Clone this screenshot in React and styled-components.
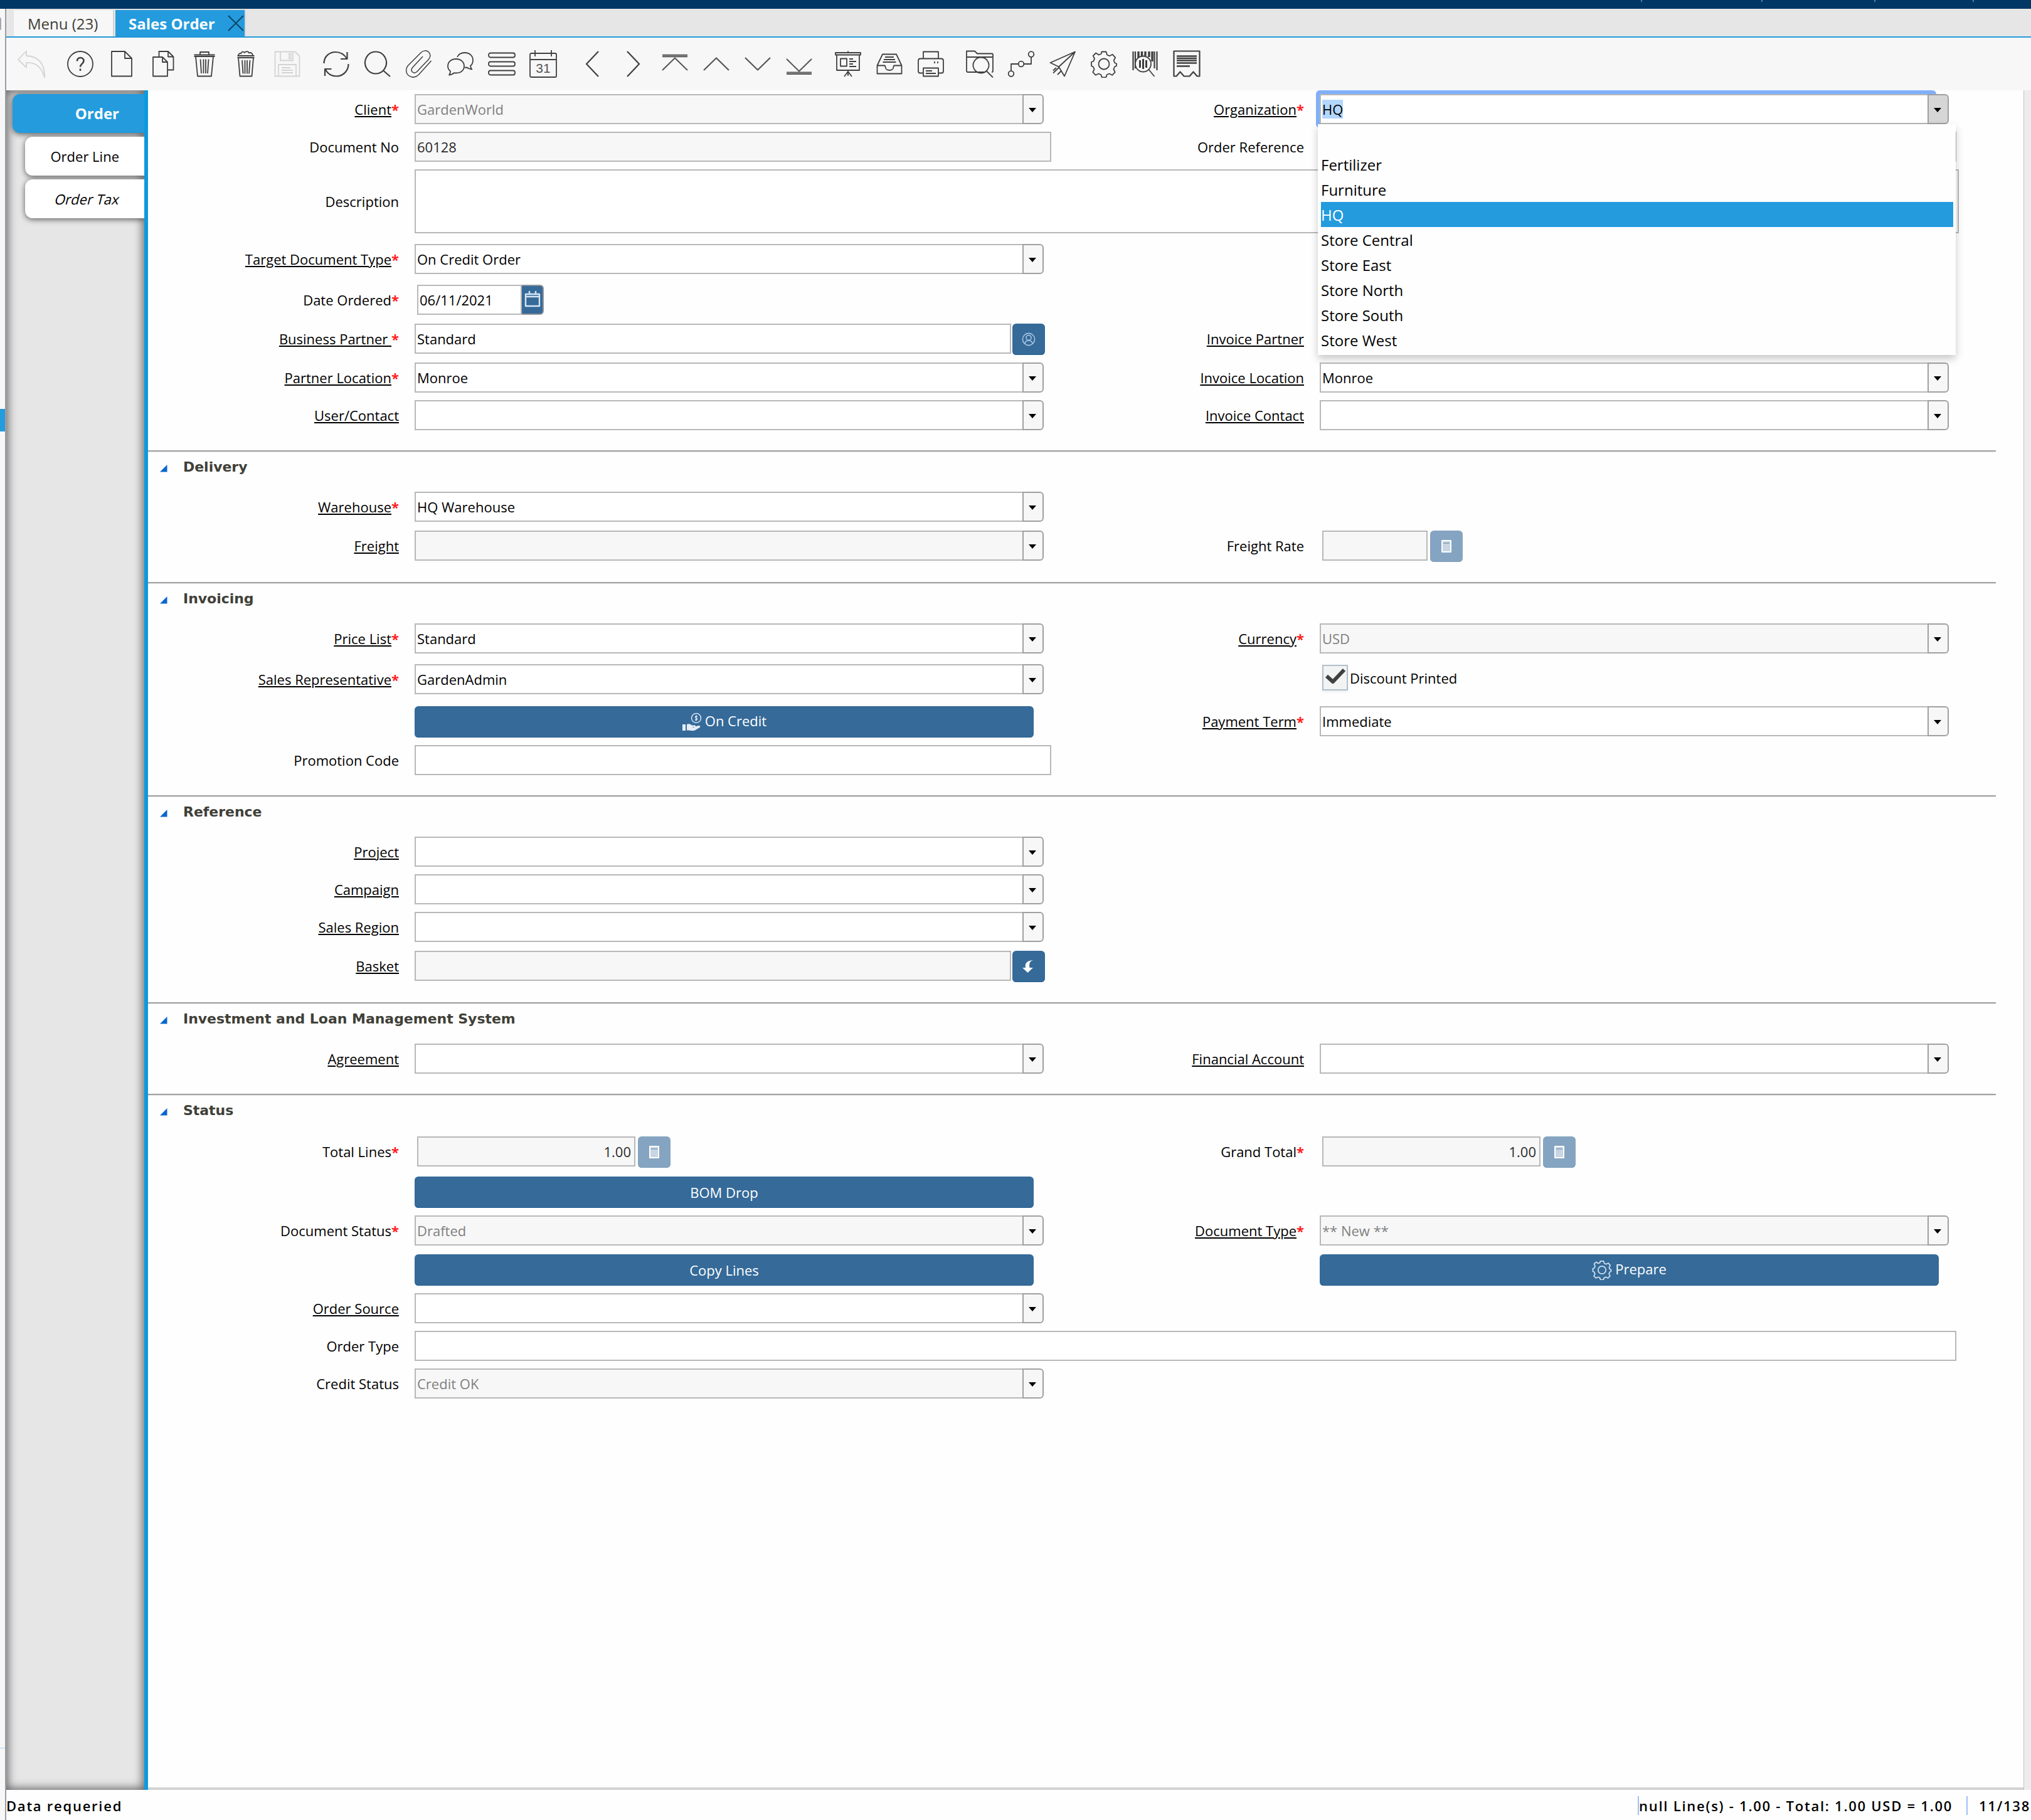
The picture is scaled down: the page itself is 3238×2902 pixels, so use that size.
import React from "react";
import styled, { createGlobalStyle, css } from "styled-components";

const GlobalStyle = createGlobalStyle`
  *, *::before, *::after { box-sizing: border-box; }
  html, body { margin: 0; padding: 0; background: #fefefe; }
  body { font-family: "Open Sans", "Noto Sans", sans-serif; font-size: 22px; color: #000; overflow: hidden; }
`;

const Screen = styled.div`
  width: 3238px;
  height: 2902px;
  display: flex;
  flex-direction: column;
  overflow: hidden;
  background: #fefefe;
`;
const TopBar = styled.header`
  height: 14px;
  flex: none;
  background: #003764;
  display: flex;
  justify-content: flex-end;
  padding-right: 91px;
`;
const TopTick = styled.span`
  width: 2px;
  height: 3px;
  margin-left: ${(p) => p.$gap}px;
  background: #5d7f9d;
`;
const Main = styled.div`
  flex: 1;
  display: flex;
  min-height: 0;
`;
const WestStrip = styled.aside`
  width: 10px;
  flex: none;
  background: #f7f7f7;
  border-right: 2px solid #9b9da5;
  display: flex;
  flex-direction: column;
`;
const StripKnob = styled.span`
  width: 2px;
  height: 20px;
  margin-top: 14px;
  background: #a9a6ae;
  border-radius: 0 2px 2px 0;
`;
const StripMark = styled.span`
  height: 36px;
  margin-top: 604px;
  background: #249bdd;
`;
const StripLine = styled.span`
  height: 3px;
  margin-top: 2098px;
  background: #dbe8f6;
`;
const Desk = styled.div`
  flex: 1;
  display: flex;
  flex-direction: column;
  min-width: 0;
`;

const TabBar = styled.nav`
  height: 46px;
  flex: none;
  background: #e6e6e6;
  border-bottom: 2px solid #249bdd;
  padding: 2px 0 0 12px;
  display: flex;
  gap: 4px;
`;
const Tab = styled.div`
  height: 42px;
  line-height: 42px;
  display: flex;
  align-items: center;
  width: ${(p) => (p.$active ? 206 : 158)}px;
  padding-left: ${(p) => (p.$active ? 21 : 22)}px;
  background: ${(p) => (p.$active ? "#249bdd" : "#f7f7f7")};
  color: ${(p) => (p.$active ? "#fff" : "#404038")};
  font-size: 24px;
  font-weight: ${(p) => (p.$active ? 700 : 400)};
  white-space: nowrap;
  box-shadow: 1px 0 2px rgba(0, 0, 0, 0.15);
`;
const TabText = styled.span`
  flex: 1;
  padding-top: 1px;
`;

const Toolbar = styled.div`
  height: 84px;
  flex: none;
  background: #f7f7f7;
  display: flex;
  align-items: center;
  gap: 34px;
  padding-left: 18px;
`;
const ToolGroup = styled.div`
  display: flex;
  gap: 22px;
`;
const Glyph = styled.svg`
  display: block;
  flex: none;
  width: ${(p) => p.$size || 44}px;
  height: ${(p) => p.$size || 44}px;
  fill: none;
  stroke: ${(p) => p.$color || "#3f3f3f"};
  stroke-width: ${(p) => p.$stroke || 1.8};
  stroke-linejoin: round;
`;

const Work = styled.div`
  height: 2710px;
  flex: none;
  display: flex;
`;
const SideBar = styled.nav`
  width: 226px;
  flex: none;
  background: #e6e6e6;
  border-right: 6px solid #0d9ade;
  box-shadow: inset 0 0 15px 2px rgba(0, 0, 0, 0.6);
  padding-top: 6px;
  display: flex;
  flex-direction: column;
  align-items: flex-end;
  gap: 6px;
  overflow: hidden;
`;
const SideTab = styled.div`
  height: 62px;
  line-height: 62px;
  width: ${(p) => (p.$active ? 210 : 190)}px;
  padding-right: 40px;
  text-align: right;
  border-radius: 12px 0 0 12px;
  background: ${(p) => (p.$active ? "#249bdd" : "#fff")};
  color: ${(p) => (p.$active ? "#fff" : "#000")};
  font-size: ${(p) => (p.$active ? 24 : 22)}px;
  font-weight: ${(p) => (p.$active ? 700 : 400)};
  box-shadow: 0 2px 10px rgba(0, 0, 0, 0.6);
`;
const Slanted = styled.span`
  display: inline-block;
  transform: skewX(-14deg);
`;
const FormArea = styled.main`
  flex: 1;
  background: #fefefe;
  border-bottom: 4px solid #d2d2d2;
  min-width: 0;
`;
const Scroller = styled.div`
  width: 12px;
  flex: none;
  background: #ececec;
  border-left: 1px solid #c4c4c4;
`;

const Row = styled.div`
  display: grid;
  grid-template-columns: 400px 1015px 378px 1fr;
  column-gap: 25px;
  height: ${(p) => p.$h || 48}px;
  line-height: ${(p) => p.$h || 48}px;
  margin-top: ${(p) => p.$gap}px;
`;
const LabelBox = styled.label`
  text-align: right;
  white-space: pre;
`;
const LabelText = styled.span`
  ${(p) =>
    p.$link &&
    css`
      text-decoration: underline;
      text-decoration-thickness: 2px;
      text-underline-offset: 2px;
    `}
`;
const Star = styled.span`
  color: #ff1d1d;
  font-weight: 700;
`;

const Inline = styled.div`
  display: flex;
  align-items: flex-start;
  height: 48px;
  padding-left: ${(p) => p.$indent || 0}px;
  gap: ${(p) => p.$gap || 0}px;
`;
const Input = styled.div`
  width: ${(p) => p.$w}px;
  height: ${(p) => p.$h || 48}px;
  line-height: 45px;
  flex: none;
  border: 2px solid #b8b8b8;
  padding: 0 5px 0 2px;
  background: ${(p) => (p.$locked ? "#f7f7f7" : "#fff")};
  color: ${(p) => (p.$dim ? "#7f7f7f" : p.$locked ? "#2b2b2b" : "#000")};
  text-align: ${(p) => (p.$right ? "right" : "left")};
  white-space: nowrap;
`;
const ComboBox = styled.div`
  position: relative;
  display: flex;
  width: 1003px;
  height: 48px;
`;
const ComboInput = styled(Input)`
  position: relative;
  flex: 1;
  border-right: 0;
`;
const ComboButton = styled.span`
  position: relative;
  width: 34px;
  flex: none;
  height: 48px;
  border: 2px solid #a0a0a0;
  border-radius: 0 6px 6px 0;
  background: ${(p) => (p.$open ? "#d6d6d6" : "#f7f7f7")};
  display: flex;
  align-items: center;
  justify-content: center;
`;
const Caret = styled.span`
  margin: 2px 2px 0 0;
  border-left: 6px solid transparent;
  border-right: 6px solid transparent;
  border-top: 7px solid #000;
`;
const FocusRing = styled.span`
  position: absolute;
  inset: -6px 20px -6px -6px;
  border-radius: 6px;
  background: #80b0f8;
`;
const Selected = styled.span`
  display: inline-block;
  line-height: 30px;
  height: 30px;
  background: #b3d7fe;
`;
const Popup = styled.ul`
  position: absolute;
  z-index: 5;
  left: -3px;
  top: 48px;
  width: 1017px;
  margin: 0;
  padding: 4px 4px 4px 5px;
  list-style: none;
  background: #fefefe;
  box-shadow: 0 6px 12px rgba(0, 0, 0, 0.22);
`;
const Option = styled.li`
  height: 40px;
  line-height: 42px;
  font-size: 24px;
  background: ${(p) => (p.$active ? "#249bdd" : "transparent")};
  color: ${(p) => (p.$active ? "#fff" : "#000")};
`;

const Action = styled.button`
  height: 50px;
  width: 987px;
  border: 0;
  border-radius: 6px;
  background: #356a99;
  box-shadow: inset 0 -1px 0 #225c8e;
  color: #fff;
  font: inherit;
  line-height: 48px;
  padding: 0;
  display: flex;
  align-items: center;
  justify-content: center;
  gap: 5px;
`;
const ActionText = styled.span`
  padding-bottom: 4px;
`;
const SquareButton = styled(Action)`
  width: 52px;
  flex: none;
  opacity: ${(p) => (p.$off ? 0.6 : 1)};
`;
const DateButton = styled.span`
  width: 35px;
  height: 48px;
  border: 2px solid #8f9499;
  border-left: 0;
  border-radius: 0 6px 6px 0;
  background: #356a99;
  display: flex;
  justify-content: center;
  padding-top: 7px;
`;
const CheckBox = styled.span`
  width: 41px;
  height: 41px;
  margin-top: 1px;
  border: 2px solid #b2bfc9;
  background: #f2f3f3;
  box-shadow: 0 3px 4px rgba(0, 0, 0, 0.06);
`;
const CheckText = styled.span`
  line-height: 45px;
`;

const SectionHead = styled.h2`
  width: 2946px;
  height: 66px;
  margin: ${(p) => p.$gap}px 0 0;
  border-top: 2px solid #a2a2a2;
  box-shadow: inset 0 1px 0 #e2e2e2;
  padding: 0 0 16px 19px;
  display: flex;
  align-items: center;
  gap: 25px;
  color: #404038;
  font: 700 22px Verdana, "DejaVu Sans", sans-serif;
  letter-spacing: -0.03px;
`;
const Fold = styled.svg`
  width: 12px;
  height: 12px;
  margin-top: 5px;
`;

const StatusBar = styled.footer`
  flex: 1;
  display: flex;
  align-items: flex-start;
  padding-top: 10px;
  font-weight: 600;
  letter-spacing: 1.75px;
  line-height: 30px;
  white-space: nowrap;
`;
const StatusText = styled.span`
  width: 2601px;
  flex: none;
`;
const StatusCell = styled.span`
  border-left: 2px solid #9dc0fa;
  height: 30px;
  flex: none;
  width: ${(p) => p.$w}px;
  padding-left: ${(p) => p.$pad}px;
`;

/* toolbar drawings on a 44 x 44 grid */
const ICONS = {
  undo: <path d="M14 1.5 1 15l13 12.500v-7.500c14-1 24 6 29 23.500C44 22 33 9.500 14 9z" />,
  help: (
    <>
      <circle cx="22" cy="22" r="20" />
      <path strokeWidth="2.600" d="M17 17.500c0-3.500 2.200-5.500 5.200-5.500s5.300 2 5.300 5c0 4.500-5.500 4.800-5.500 9.800M22 29.500v3.500" />
    </>
  ),
  page: <path d="M6 2h21l11 11v28.500H6zM27 2v11h11" />,
  copy: <path d="M15.500 10V2H30l8.500 8.500v21H30M6 11h15l8 8v22.500H6zM21 11v8h8M30 2v8.500h8.500" />,
  trash: (
    <path d="M5.500 7.500h33M5.500 10h33M15 7V3h14v4M8 10l3 31.500h22L36 10M15.500 14.500 17 37M20.500 14.500v22.500M24 14.500v22.500M28.500 14.500 27 37" />
  ),
  shred: (
    <path d="M8.500 9h27M8.500 12h27M10 12l2.500 29.500h19L34 12M10 9c0-3 2-4.500 4-3.500C15 2.500 18 1.500 20 4c2-2.500 6-2.500 7 .5 3-1.500 6 .5 6 4.500M16 16l1.500 21.500M20.500 16v21.500M24 16v21.500M28.500 16 27 37.500" />
  ),
  save: (
    <>
      <path d="M2.500 2.500h32l7 7v32h-39zM11 2.500v14h20v-14M25 5.500v8h3v-8zM8 41.500V23h28v18.500M13 28h14M13 32h18M13 36h18" />
    </>
  ),
  refresh: (
    <path strokeWidth="2.200" d="M2.500 21C2.500 10 11 3 21 3c8 0 14 4 18 10.500M39.500 3v11H29M41.500 22c0 11-8.500 19.500-19 19.500C14.500 41.500 8 37 4.500 30.500M4 41V30h10.500" />
  ),
  search: (
    <path strokeWidth="2.200" d="M19 2.500a17 17.500 0 1 0 .01 0zM31 32.500l11 9.500" />
  ),
  clip: (
    <path strokeWidth="1.500" d="M41.500 17 22 38.500c-5 5-11 6-16.500 2-5-4.500-5-11-1-16L25 4c4-4 9-4 12.500-1 3.500 3.500 3 8.500-.5 12L19 34c-2.500 2.500-5.500 2.500-7.500.8-2-2-1.800-5 .5-7.500L28 10" />
  ),
  chat: (
    <path d="M15 14c8 0 13 5 13 11.500S23 36.500 15 36.500c-1 0-2 0-3-.3-2 2-4.500 3-8 3.300 1.500-2 2.300-3.700 2-6C3.500 31.500 2 29 2 25.500 2 19 7 14 15 14zM17 11c2-4.500 7-7 12-7 7.500 0 13 4.800 13 12 0 4-1.500 7-4 9 0 2 .7 3.600 2.300 5.500-3.600-.3-6-1.300-8-3-1 .2-2 .3-3.300.2" />
  ),
  lines: (
    <>
      <rect x="1" y="4.500" width="42" height="7" rx="3" />
      <rect x="1" y="18.500" width="42" height="7" rx="3" />
      <rect x="1" y="32.500" width="42" height="7" rx="3" />
    </>
  ),
  calendar: (
    <>
      <rect x="1" y="5" width="42" height="38" rx="2" />
      <path d="M1 15h42M9 0v10M35 0v10" />
      <text x="22" y="36" textAnchor="middle" fontSize="21" fontFamily="Liberation Sans, sans-serif" fill="#555" stroke="none">
        31
      </text>
    </>
  ),
  left: <path strokeWidth="2.200" d="M32 2 13 22l19 20" />,
  right: <path strokeWidth="2.200" d="M12 2l19 20-19 20" />,
  first: <path strokeWidth="2" stroke="#555" d="M2 7.800h40M2 10.200h40M2 32l20-19.500L42 32" />,
  up: <path strokeWidth="2.200" stroke="#555" d="M2 32l20-19.500L42 32" />,
  down: <path strokeWidth="2.200" stroke="#555" d="M2 12l20 19.500L42 12" />,
  last: <path strokeWidth="2" stroke="#555" d="M2 14l20 19.500L42 14M2 35.500h40M2 38h40" />,
  board: (
    <path d="M2 4h40v3.500H2zM4 7.500v24.500h36V7.500M22 1.500V4M10 13.500h10v12H10zM24 14h6M24 18h11M24 22h6M24 26h11M22 32v9M22 34l-6 8M22 34l6 8" />
  ),
  inbox: (
    <path d="M2.500 24.500 11 6.500h22l8.500 18v13h-39zM2.500 24.500H14c1 0 1.500.5 1.500 2 0 3.500 3 5.500 6.500 5.500s6.500-2 6.500-5.500c0-1.500.5-2 1.500-2h11.500M15 11h14M13 15h18M11.500 19h21" />
  ),
  print: (
    <path d="M10 13.500V2.500h24v11M10 36.500H5c-2 0-3-1-3-3V17c0-2 1.500-3.500 3.500-3.500h33c2 0 3.500 1.500 3.500 3.500v16.500c0 2-1 3-3 3h-5M10 28.500h24v13H10zM14 33h10M14 37h16M28 18v3M33 18v3" />
  ),
  find: (
    <path d="M31 35H3c-1.500 0-2-1-2-2V1.500h13l4 4h23.500c1 0 1.500.5 1.500 1.500v26c0 1-.5 2-2 2M1 11h42M24 11.500a12.500 12.500 0 1 0 .01 0zM33 33.500l10 10" />
  ),
  flow: (
    <>
      <circle cx="6" cy="37.500" r="4.300" />
      <circle cx="22" cy="22" r="4.300" />
      <circle cx="38" cy="6.500" r="4.300" />
      <path d="M6 33V22h11.500M26.500 22H38V11" />
    </>
  ),
  plane: <path d="M42 2.500 2.500 20 16 26.500zM42 2.500 16 26.500 25 41.500zM17 27l-10 9.500M20 33l-6 6M12 28l-5 4.500" />,
  gear: (
    <>
      <circle cx="22" cy="22" r="8.500" />
      <path d="M18.500 2.500h7l1.500 5 4 1.700 4.700-2.400 4.500 5-2.500 4.500 1.300 3.700 3 1.500v3.500l-3 1.500-1.600 4 2.300 4.700-4.500 4.600-4.700-2.300-3.700 1.500-1.600 4.500h-6.400l-1.600-4.500-3.700-1.500-4.700 2.300-4.500-4.600 2.300-4.700L5 26.500 2 25v-6l3.500-1.500L7 13.500l-2.300-4.700 4.500-4.300 4.500 3L17.500 6z" />
    </>
  ),
  barcode: (
    <>
      <path strokeWidth="2.200" d="M2.500 2v30M6 2v27M40.500 2v30M36.500 2v27" />
      <path strokeWidth="3.400" d="M11 2v14M16.500 2v9M22 2v7M28 2v9M33 2v16" />
      <circle cx="18.500" cy="22" r="12.500" fill="#f7f7f7" />
      <path strokeWidth="3" d="M13.500 16v12M18.500 14v16M23.500 16v12" />
      <path d="M27.500 31l9 11" />
    </>
  ),
  receipt: (
    <>
      <path strokeWidth="2.200" d="M1.500 1.500h41v40h-4l-6-7-6 7h-9l-6-7-6 7h-4z" />
      <path strokeWidth="2.400" d="M6 9.500h32M6 13h32M6 16.500h32M6 20.500h32M6 25.500h21" />
    </>
  ),
};

const GROUPS = [
  ["undo"],
  ["help", "page", "copy", "trash", "shred", "save"],
  ["refresh", "search", "clip", "chat", "lines", "calendar"],
  ["left", "right", "first", "up", "down", "last"],
  ["board", "inbox", "print"],
  ["find", "flow", "plane", "gear", "barcode", "receipt"],
];
const DISABLED = ["undo", "save"];

const ORGS = ["", "Fertilizer", "Furniture", "HQ", "Store Central", "Store East", "Store North", "Store South", "Store West"];

function Label({ children, req, link }) {
  return (
    <LabelBox>
      <LabelText $link={link}>{children}</LabelText>
      {req && <Star>*</Star>}
    </LabelBox>
  );
}

function Combo({ value, locked }) {
  return (
    <ComboBox>
      <ComboInput $locked={locked} $dim={locked}>{value}</ComboInput>
      <ComboButton>
        <Caret />
      </ComboButton>
    </ComboBox>
  );
}

function OpenCombo({ value }) {
  return (
    <ComboBox>
      <FocusRing />
      <ComboInput>
        <Selected>{value}</Selected>
      </ComboInput>
      <ComboButton $open>
        <Caret />
      </ComboButton>
      <Popup>
        {ORGS.map((name) => (
          <Option key={name || "none"} $active={name === value}>{name}</Option>
        ))}
      </Popup>
    </ComboBox>
  );
}

function NumberField({ w, value, indent }) {
  return (
    <Inline $indent={indent} $gap={4}>
      <Input $w={w} $locked $right>{value}</Input>
      <SquareButton $off>
        <Glyph viewBox="0 0 18 20" $size={20} $color="#fff" $stroke={2}>
          <path fill="#fff" fillOpacity="0.55" d="M2 1h14v18H2z" />
          <path stroke="#356a99" strokeWidth="1.600" d="M4 5h10" />
        </Glyph>
      </SquareButton>
    </Inline>
  );
}

function Section({ title, gap }) {
  return (
    <SectionHead $gap={gap}>
      <Fold viewBox="0 0 12 12">
        <path d="M11.500 0v11.500H0z" fill="#0a66cc" />
      </Fold>
      {title}
    </SectionHead>
  );
}

export default function App() {
  return (
    <Screen>
      <GlobalStyle />
      <TopBar>
        <TopTick $gap={0} />
        <TopTick $gap={190} />
        <TopTick $gap={178} />
        <TopTick $gap={155} />
      </TopBar>
      <Main>
        <WestStrip>
          <StripKnob />
          <StripMark />
          <StripLine />
        </WestStrip>
        <Desk>
          <TabBar>
            <Tab>
              <TabText>Menu (23)</TabText>
            </Tab>
            <Tab $active>
              <TabText>Sales Order</TabText>
              <Glyph viewBox="0 0 28 28" $size={28} $color="#0b4566" $stroke={2}>
                <path d="M2 2l24 24M26 2 2 26" />
              </Glyph>
            </Tab>
          </TabBar>
          <Toolbar>
            {GROUPS.map((group) => (
              <ToolGroup key={group[0]}>
                {group.map((name) => (
                  <Glyph key={name} viewBox="0 0 44 44" $color={DISABLED.includes(name) ? "#d4d4d4" : undefined}>
                    {ICONS[name]}
                  </Glyph>
                ))}
              </ToolGroup>
            ))}
          </Toolbar>
          <Work>
            <SideBar>
              <SideTab $active>Order</SideTab>
              <SideTab>Order Line</SideTab>
              <SideTab>
                <Slanted>Order Tax</Slanted>
              </SideTab>
            </SideBar>
            <FormArea>
              <Row $gap={6}>
                <Label link req>Client</Label>
                <Combo value="GardenWorld" locked />
                <Label link req>Organization</Label>
                <OpenCombo value="HQ" />
              </Row>
              <Row $gap={12}>
                <Label>Document No</Label>
                <Input $w={1015} $locked>60128</Input>
                <Label>Order Reference</Label>
                <Input $w={1015} />
              </Row>
              <Row $gap={12} $h={102}>
                <Label>Description</Label>
                <Input $w={2462} $h={102} />
              </Row>
              <Row $gap={17}>
                <Label link req>Target Document Type</Label>
                <Combo value="On Credit Order" />
              </Row>
              <Row $gap={17}>
                <Label req>Date Ordered</Label>
                <Inline $indent={4}>
                  <Input $w={167}>06/11/2021</Input>
                  <DateButton>
                    <Glyph viewBox="0 0 28 28" $size={28} $color="#d6e6f5" $stroke={2.4}>
                      <path d="M3 6h22v19H3zM3 10h22M9 1v6M19 1v6" />
                    </Glyph>
                  </DateButton>
                </Inline>
              </Row>
              <Row $gap={14}>
                <Label link req>{"Business Partner "}</Label>
                <Inline $gap={2}>
                  <Input $w={951}>Standard</Input>
                  <SquareButton>
                    <Glyph viewBox="0 0 22 22" $size={22} $color="#a9c6e0" $stroke={1.6}>
                      <circle cx="11" cy="11" r="9.600" />
                      <circle cx="11" cy="8.500" r="4" />
                      <path d="M5 18c.5-3.500 3-5 6-5s5.500 1.500 6 5" />
                    </Glyph>
                  </SquareButton>
                </Inline>
                <Label link>Invoice Partner</Label>
              </Row>
              <Row $gap={14}>
                <Label link req>Partner Location</Label>
                <Combo value="Monroe" />
                <Label link>Invoice Location</Label>
                <Combo value="Monroe" />
              </Row>
              <Row $gap={12}>
                <Label link>User/Contact</Label>
                <Combo />
                <Label link>Invoice Contact</Label>
                <Combo />
              </Row>

              <Section gap={32} title="Delivery" />
              <Row $gap={0}>
                <Label link req>Warehouse</Label>
                <Combo value="HQ Warehouse" />
              </Row>
              <Row $gap={14}>
                <Label link>Freight</Label>
                <Combo locked />
                <Label>Freight Rate</Label>
                <NumberField w={168} indent={4} />
              </Row>

              <Section gap={34} title="Invoicing" />
              <Row $gap={0}>
                <Label link req>Price List</Label>
                <Combo value="Standard" />
                <Label link req>Currency</Label>
                <Combo value="USD" locked />
              </Row>
              <Row $gap={17}>
                <Label link req>Sales Representative</Label>
                <Combo value="GardenAdmin" />
                <span />
                <Inline $indent={4} $gap={3}>
                  <CheckBox>
                    <Glyph viewBox="0 0 37 37" $size={37} $color="#404040" $stroke={6}>
                      <path d="M5 16l10 9L33 6" />
                    </Glyph>
                  </CheckBox>
                  <CheckText>Discount Printed</CheckText>
                </Inline>
              </Row>
              <Row $gap={19}>
                <span />
                <Action>
                  <Glyph viewBox="0 0 32 32" $size={32} $color="#cfe0ef" $stroke={1.6}>
                    <circle cx="23" cy="10" r="7.500" />
                    <path d="M23 5.500v9M25 7.500c-3.500-1.500-4.500 1.500-2 2.500s1.500 4-2 2.500" />
                    <path fill="#e4eef7" stroke="none" d="M1 20h5v10H1zM8 20c4-2 6 0 8 1.500h5c1.500 0 1.500 2.500 0 2.500h-4l1 1 8-3c3-.5 4.500 1.500 2.500 3L21 29.500c-4 1.500-8 0-13 0z" />
                  </Glyph>
                  <ActionText>On Credit</ActionText>
                </Action>
                <Label link req>Payment Term</Label>
                <Combo value="Immediate" />
              </Row>
              <Row $gap={14}>
                <Label>Promotion Code</Label>
                <Input $w={1015} />
              </Row>

              <Section gap={32} title="Reference" />
              <Row $gap={0}>
                <Label link>Project</Label>
                <Combo />
              </Row>
              <Row $gap={12}>
                <Label link>Campaign</Label>
                <Combo />
              </Row>
              <Row $gap={12}>
                <Label link>Sales Region</Label>
                <Combo />
              </Row>
              <Row $gap={14}>
                <Label link>Basket</Label>
                <Inline $gap={2}>
                  <Input $w={951} $locked />
                  <SquareButton>
                    <Glyph viewBox="0 0 20 20" $size={20} $color="none">
                      <path fill="#fff" d="M19.500 0C13 0 10 4 11.500 12H17l-8.500 8L0 12h5C3.500 4 8 0 19.500 0z" />
                    </Glyph>
                  </SquareButton>
                </Inline>
              </Row>

              <Section gap={34} title="Investment and Loan Management System" />
              <Row $gap={0}>
                <Label link>Agreement</Label>
                <Combo />
                <Label link>Financial Account</Label>
                <Combo />
              </Row>

              <Section gap={32} title="Status" />
              <Row $gap={2}>
                <Label req>Total Lines</Label>
                <NumberField w={348} value="1.00" indent={4} />
                <Label req>Grand Total</Label>
                <NumberField w={348} value="1.00" indent={4} />
              </Row>
              <Row $gap={16}>
                <span />
                <Action>BOM Drop</Action>
              </Row>
              <Row $gap={14}>
                <Label req>Document Status</Label>
                <Combo value="Drafted" locked />
                <Label link req>Document Type</Label>
                <Combo value="** New **" locked />
              </Row>
              <Row $gap={14}>
                <span />
                <Action>Copy Lines</Action>
                <span />
                <Action>
                  <Glyph viewBox="0 0 44 44" $size={32} $color="#cfe0ef" $stroke={2.4}>
                    {ICONS.gear}
                  </Glyph>
                  <ActionText>Prepare</ActionText>
                </Action>
              </Row>
              <Row $gap={14}>
                <Label link>Order Source</Label>
                <Combo />
              </Row>
              <Row $gap={12}>
                <Label>Order Type</Label>
                <Input $w={2458} />
              </Row>
              <Row $gap={12}>
                <Label>Credit Status</Label>
                <Combo value="Credit OK" locked />
              </Row>
            </FormArea>
            <Scroller />
          </Work>
          <StatusBar>
            <StatusText>Data requeried</StatusText>
            <StatusCell $w={524} $pad={0}>null Line(s) - 1.00 - Total: 1.00 USD = 1.00</StatusCell>
            <StatusCell $w={103} $pad={18}>11/138</StatusCell>
          </StatusBar>
        </Desk>
      </Main>
    </Screen>
  );
}
